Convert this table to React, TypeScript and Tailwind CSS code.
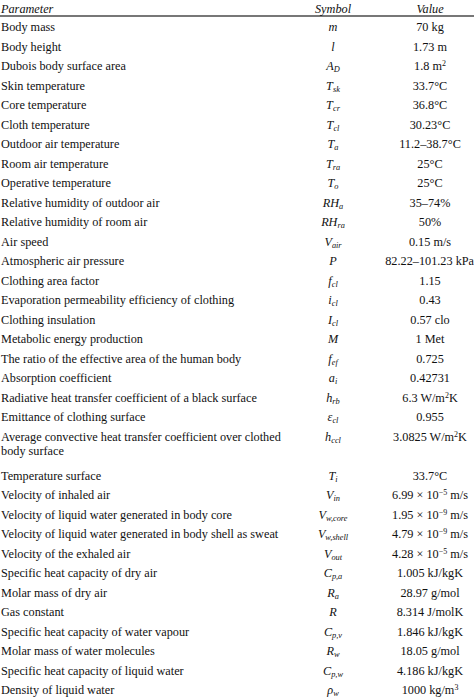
import React from 'react';

type Row = {
  param: React.ReactNode;
  sym: React.ReactNode;
  value: React.ReactNode;
  tall?: boolean;
  alignEnd?: boolean;
};

const S = ({ b, s }: { b: string; s?: string }) => (
  <span className="italic">
    {b}
    {s && <sub className="text-[0.68em]">{s}</sub>}
  </span>
);

const rows: Row[] = [
  { param: 'Body mass', sym: <S b="m" />, value: '70 kg' },
  { param: 'Body height', sym: <S b="l" />, value: '1.73 m' },
  { param: 'Dubois body surface area', sym: <S b="A" s="D" />, value: <>1.8 m<sup className="text-[0.65em]">2</sup></> },
  { param: 'Skin temperature', sym: <S b="T" s="sk" />, value: '33.7°C' },
  { param: 'Core temperature', sym: <S b="T" s="cr" />, value: '36.8°C' },
  { param: 'Cloth temperature', sym: <S b="T" s="cl" />, value: '30.23°C' },
  { param: 'Outdoor air temperature', sym: <S b="T" s="a" />, value: '11.2–38.7°C' },
  { param: 'Room air temperature', sym: <S b="T" s="ra" />, value: '25°C' },
  { param: 'Operative temperature', sym: <S b="T" s="o" />, value: '25°C' },
  { param: 'Relative humidity of outdoor air', sym: <S b="RH" s="a" />, value: '35–74%' },
  { param: 'Relative humidity of room air', sym: <S b="RH" s="ra" />, value: '50%' },
  { param: 'Air speed', sym: <S b="V" s="air" />, value: '0.15 m/s' },
  { param: 'Atmospheric air pressure', sym: <S b="P" />, value: '82.22–101.23 kPa', alignEnd: true },
  { param: 'Clothing area factor', sym: <S b="f" s="cl" />, value: '1.15' },
  { param: 'Evaporation permeability efficiency of clothing', sym: <S b="i" s="cl" />, value: '0.43' },
  { param: 'Clothing insulation', sym: <S b="I" s="cl" />, value: '0.57 clo' },
  { param: 'Metabolic energy production', sym: <S b="M" />, value: '1 Met' },
  { param: 'The ratio of the effective area of the human body', sym: <S b="f" s="ef" />, value: '0.725' },
  { param: 'Absorption coefficient', sym: <S b="a" s="i" />, value: '0.42731' },
  {
    param: 'Radiative heat transfer coefficient of a black surface',
    sym: <S b="h" s="rb" />,
    value: <>6.3 W/m<sup className="text-[0.65em]">2</sup>K</>,
  },
  { param: 'Emittance of clothing surface', sym: <S b="ε" s="cl" />, value: '0.955' },
  {
    param: (
      <>
        Average convective heat transfer coefficient over clothed
        <br />
        body surface
      </>
    ),
    sym: <S b="h" s="ccl" />,
    value: <>3.0825 W/m<sup className="text-[0.65em]">2</sup>K</>,
    tall: true,
  },
  { param: 'Temperature surface', sym: <S b="T" s="i" />, value: '33.7°C' },
  {
    param: 'Velocity of inhaled air',
    sym: <S b="V" s="in" />,
    value: <>6.99 × 10<sup className="text-[0.65em]">−5</sup> m/s</>,
  },
  {
    param: 'Velocity of liquid water generated in body core',
    sym: <S b="V" s="w,core" />,
    value: <>1.95 × 10<sup className="text-[0.65em]">−9</sup> m/s</>,
  },
  {
    param: 'Velocity of liquid water generated in body shell as sweat',
    sym: <S b="V" s="w,shell" />,
    value: <>4.79 × 10<sup className="text-[0.65em]">−9</sup> m/s</>,
  },
  {
    param: 'Velocity of the exhaled air',
    sym: <S b="V" s="out" />,
    value: <>4.28 × 10<sup className="text-[0.65em]">−5</sup> m/s</>,
  },
  { param: 'Specific heat capacity of dry air', sym: <S b="C" s="p,a" />, value: '1.005 kJ/kgK' },
  { param: 'Molar mass of dry air', sym: <S b="R" s="a" />, value: '28.97 g/mol' },
  { param: 'Gas constant', sym: <S b="R" />, value: '8.314 J/molK' },
  { param: 'Specific heat capacity of water vapour', sym: <S b="C" s="p,v" />, value: '1.846 kJ/kgK' },
  { param: 'Molar mass of water molecules', sym: <S b="R" s="w" />, value: '18.05 g/mol' },
  { param: 'Specific heat capacity of liquid water', sym: <S b="C" s="p,w" />, value: '4.186 kJ/kgK' },
  {
    param: 'Density of liquid water',
    sym: <S b="ρ" s="w" />,
    value: <>1000 kg/m<sup className="text-[0.65em]">3</sup></>,
  },
];

export default function App() {
  return (
    <div
      className="h-[698px] w-[474px] overflow-hidden bg-white text-[12.25px] text-[#111]"
      style={{ fontFamily: '"Liberation Serif", "Times New Roman", serif' }}
    >
      <div className="grid h-[15px] grid-cols-[280px_106px_88px] items-center italic">
        <div className="pl-[1px]">Parameter</div>
        <div className="text-center">Symbol</div>
        <div className="text-center">Value</div>
      </div>
      <div className="h-[2px] bg-[#777]" />
      <div className="pt-[0.5px]">
        {rows.map((r, i) => (
          <div
            key={i}
            className={
              r.tall
                ? 'grid h-[39px] grid-cols-[280px_106px_88px] items-start pt-[2.5px] leading-[14.5px]'
                : 'grid h-[19.5px] grid-cols-[280px_106px_88px] items-center'
            }
          >
            <div className="whitespace-nowrap pl-[1px]">{r.param}</div>
            <div className="flex justify-center whitespace-nowrap">{r.sym}</div>
            <div
              className={
                r.alignEnd
                  ? 'flex justify-end whitespace-nowrap'
                  : 'flex justify-center whitespace-nowrap'
              }
            >
              <span>{r.value}</span>
            </div>
          </div>
        ))}
      </div>
    </div>
  );
}
